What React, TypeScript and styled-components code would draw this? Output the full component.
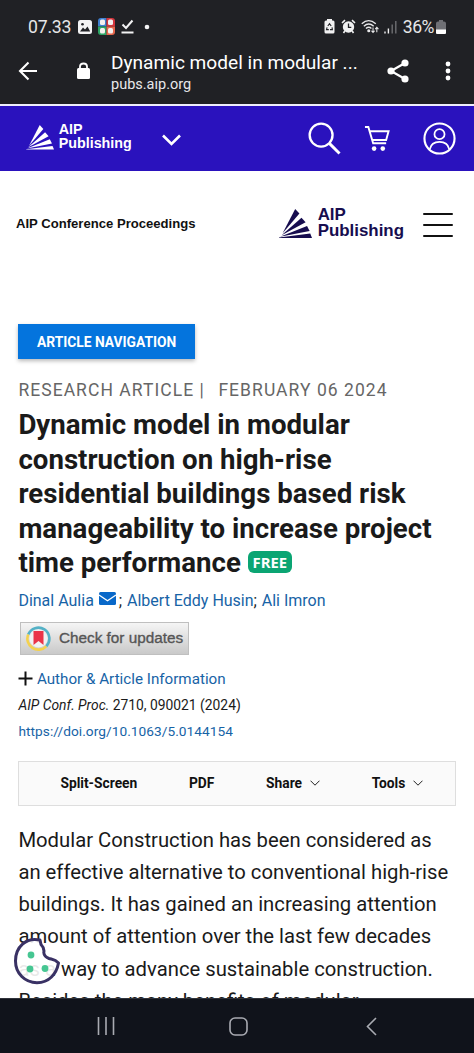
import styled, { createGlobalStyle } from "styled-components";

import type { FC } from "react";

const GlobalStyle = createGlobalStyle`
    * {
        box-sizing: border-box;
    }

    body {
        margin: 0;
        background-color: #fff;
        font-family: Roboto, "Liberation Sans", sans-serif;
    }

    h1, p {
        margin: 0;
    }

    svg {
        display: block;
        flex: none;
    }
`;

const Screen = styled.div`
    width: 474px;
    height: 1053px;
    display: flex;
    flex-flow: column;
    position: relative;
    overflow: hidden;
`;

const StatusBar = styled.div`
    height: 46px;
    flex: none;
    padding: 7px 28px 0 28px;
    display: flex;
    align-items: center;
    justify-content: space-between;
    background-color: #202125;
    color: #e6e6e8;
    font-size: 17.6px;
`;

const StatusGroup = styled.div<{ $gap: number }>`
    display: flex;
    align-items: center;
    gap: ${props => props.$gap}px;
`;

const Clock = styled.span`
    width: 43px;
    letter-spacing: -.2px;
    white-space: nowrap;
`;

const Battery = styled.span`
    display: flex;
    align-items: center;
    gap: 2px;
    letter-spacing: -.5px;
`;

const BrowserBar = styled.div`
    height: 58px;
    flex: none;
    padding: 0 20px 8px 18px;
    display: flex;
    align-items: center;
    background-color: #202125;
    color: #fff;
`;

const PageInfo = styled.div`
    width: 250px;
    margin: 0 26px 0 20px;
    padding-top: 1px;
    display: flex;
    flex-flow: column;
    white-space: nowrap;
`;

const PageTitle = styled.span`
    font-size: 19.1px;
    line-height: 25px;
`;

const PageHost = styled.span`
    font-size: 14.5px;
    line-height: 19px;
    color: #e8e8ea;
`;

const MoreButton = styled.div`
    margin-left: 35px;
`;

const SiteBar = styled.header`
    height: 67px;
    flex: none;
    padding: 0 18px 0 26px;
    display: flex;
    align-items: center;
    border-top: 2px solid #f0eefc;
    background-color: #2a12bd;
    color: #fff;
`;

const Logo = styled.div<{ $size: number; $color: string }>`
    margin-bottom: 4px;
    display: flex;
    align-items: flex-end;
    gap: ${props => props.$size * .33}px;
    color: ${props => props.$color};
    font-family: "Liberation Sans", sans-serif;
    font-weight: 700;
    font-size: ${props => props.$size}px;
    line-height: ${props => props.$size * .93}px;
`;

const LogoName = styled.span`
    display: flex;
    flex-flow: column;
`;

const SiteChevron = styled.div`
    margin: 3px auto 0 30px;
`;

const SiteActions = styled.div`
    display: flex;
    align-items: center;
`;

const SiteAction = styled.div<{ $before?: number }>`
    margin-left: ${props => props.$before ?? 0}px;
`;

const JournalBar = styled.div`
    height: 107px;
    flex: none;
    padding: 0 21px 0 16px;
    display: flex;
    align-items: center;
`;

const JournalName = styled.span`
    margin: 0 auto 3px 0;
    color: #111;
    font-family: "Liberation Sans", sans-serif;
    font-weight: 700;
    font-size: 13.1px;
    white-space: nowrap;
`;

const MenuLines = styled.div`
    width: 30px;
    height: 24px;
    margin: 1px 0 0 19px;
    display: flex;
    flex-flow: column;
    justify-content: space-between;

    span {
        height: 2px;
        border-radius: 1px;
        background-color: #111;
    }
`;

const Article = styled.main`
    flex: 1;
    min-height: 0;
    padding: 46px 18px 0 18.4px;
    display: flex;
    flex-flow: column;
    align-items: flex-start;
    overflow: hidden;
    color: #1a1a1a;
    white-space: nowrap;
`;

const NavigationButton = styled.button`
    width: 176.5px;
    height: 35px;
    flex: none;
    padding: 0;
    border: 0;
    background-color: #0474dd;
    box-shadow: 0 2px 4px rgba(0, 0, 0, .28);
    color: #fff;
    font-family: inherit;
    font-weight: 700;
    font-size: 13.8px;
`;

const Kicker = styled.div`
    margin-top: 19px;
    display: flex;
    color: #666;
    font-size: 17.5px;
    line-height: 24px;
    letter-spacing: 1.05px;
`;

const KickerDate = styled.span`
    margin-left: 13.5px;
`;

const ArticleTitle = styled.h1`
    margin-top: 6px;
    font-weight: 700;
    font-size: 27.65px;
    line-height: 34.55px;
`;

const Line = styled.span`
    display: block;
`;

const FreeTag = styled.span`
    width: 44px;
    height: 22px;
    margin-left: 7px;
    display: inline-flex;
    align-items: center;
    justify-content: center;
    vertical-align: 4px;
    border-radius: 6px;
    background-color: #0ba573;
    color: #fff;
    font-family: "Open Sans", sans-serif;
    font-weight: 700;
    font-size: 14.8px;
    line-height: 22px;
`;

const Authors = styled.div`
    height: 24px;
    margin-top: 10px;
    display: flex;
    align-items: center;
    font-size: 16px;
`;

const Link = styled.a`
    color: #1763a6;
`;

const Mail = styled.span`
    margin: 0 3px 4px 5px;
`;

const Separator = styled.span`
    margin-right: 4.8px;
`;

const UpdatesBadge = styled.div`
    width: 169.5px;
    height: 33px;
    flex: none;
    margin: 12px 0 0 1.6px;
    padding-left: 5px;
    display: flex;
    align-items: center;
    gap: 8px;
    border: 1px solid #bfbfbf;
    background: linear-gradient(#f5f5f5, #c9c9c9);
    color: #555;
    font-family: "Liberation Sans", sans-serif;
    font-weight: 400;
    font-size: 15.3px;
    -webkit-text-stroke: .35px #555;
`;

const InfoToggle = styled.div`
    height: 26px;
    margin-top: 15px;
    display: flex;
    align-items: center;
    gap: 3.5px;
    font-size: 15.2px;
`;

const Citation = styled.p`
    margin-top: 4px;
    font-size: 13.85px;
    line-height: 26px;
`;

const Doi = styled.p`
    font-size: 13.7px;
    line-height: 26px;
    letter-spacing: .05px;
`;

const Toolbar = styled.div`
    width: 438px;
    height: 45px;
    flex: none;
    margin-top: 17px;
    padding: 0 32px 0 41px;
    display: flex;
    align-items: center;
    justify-content: space-between;
    border: 1px solid #dedede;
    background-color: #fafafa;
    color: #111;
    font-weight: 700;
    font-size: 13.8px;
`;

const ToolbarItem = styled.span`
    display: flex;
    align-items: center;
    gap: 8px;
`;

const Abstract = styled.p`
    margin-top: 18px;
    font-size: 20.25px;
    line-height: 32.2px;
`;

const CookieButton = styled.div`
    position: absolute;
    left: 13px;
    top: 937px;
`;

const SystemBar = styled.nav`
    height: 55px;
    flex: none;
    display: grid;
    grid-template-columns: 212px 52px 214px;
    align-items: center;
    justify-items: center;
    border-top: 1px solid #30333b;
    background-color: #10131b;
`;

const SystemRecents = styled.div`
    grid-column: 1;
`;

const LogoMark: FC<{ width: number }> = props => (
    <svg width={props.width} height={props.width * .88} viewBox="0 0 32 28" fill="currentColor">
        <path d="M15.7 0 L19.8 4.4 L3.5 23.5 Z" />
        <path d="M21.8 8.3 L25.8 12.8 L2.5 25.3 Z" />
        <path d="M27.2 16.3 L29.7 21.2 L1 26.8 Z" />
        <path d="M30.3 23.8 L32 28 H0 V27.5 Z" />
    </svg>
);

const AipLogo: FC<{ size: number; mark: number; color: string }> = props => (
    <Logo $size={props.size} $color={props.color}>
        <LogoMark width={props.mark} />
        <LogoName>
            <span>AIP</span>
            <span>Publishing</span>
        </LogoName>
    </Logo>
);

const SmallChevron = () => (
    <svg width="10" height="6" viewBox="0 0 10 6" fill="none" stroke="#222" strokeWidth="1">
        <path d="M.5 .7 L5 5.2 L9.5 .7" />
    </svg>
);

const StatusIcons = () => (
    <StatusGroup $gap={6}>
        <svg width="14" height="14" viewBox="0 0 14 14">
            <rect width="14" height="14" rx="2.5" fill="#f3f3f4" />
            <path d="M2 11.5 L5 7.5 L7 9.5 L9.5 6.5 L12.2 11.5 Z" fill="#202125" />
            <circle cx="4.5" cy="4.3" r="1.3" fill="#202125" />
        </svg>
        <svg width="17" height="17" viewBox="0 0 17 17">
            <path d="M3 0 H8.5 V8.5 H0 V3 Q0 0 3 0" fill="#3f7fd0" />
            <path d="M8.5 0 H14 Q17 0 17 3 V8.5 H8.5 Z" fill="#d3343c" />
            <path d="M0 8.5 H8.5 V17 H3 Q0 17 0 14 Z" fill="#2da565" />
            <path d="M8.5 8.5 H17 V14 Q17 17 14 17 H8.5 Z" fill="#e5654b" />
            <g fill="#f4f0ee">
                <rect x="2" y="1.5" width="5" height="5.5" rx="1.5" />
                <rect x="10" y="1.5" width="5" height="5.5" rx="1.5" />
                <rect x="2" y="10" width="5" height="5.5" rx="1.5" />
                <rect x="10" y="10" width="5" height="5.5" rx="1.5" />
            </g>
        </svg>
        <svg width="13" height="15" viewBox="0 0 13 15" fill="none" stroke="#f3f3f4" strokeWidth="2">
            <path d="M1.5 5.5 L5 9 L11.5 1.5 M.5 13.5 H12.5" />
        </svg>
        <svg width="17" height="6" viewBox="0 0 17 6" fill="#f3f3f4">
            <circle cx="7" cy="3" r="2.3" />
        </svg>
    </StatusGroup>
);

const SignalIcons = () => (
    <StatusGroup $gap={5}>
        <svg width="12" height="15" viewBox="0 0 12 15">
            <path d="M3 0 H8 V1.5 H9 Q10.5 1.5 10.5 3 V13 Q10.5 14.5 9 14.5 H2 Q.5 14.5 .5 13 V3 Q.5 1.5 2 1.5 H3 Z" fill="#f1f1f2" />
            <path d="M3.8 7 L5.5 4.6 L7.2 7 M8 8.3 L8.4 10.6 H6 M4.8 10.6 H2.5 L3.1 8.3" fill="none" stroke="#202125" strokeWidth="1.1" />
        </svg>
        <svg width="15" height="15" viewBox="0 0 15 15">
            <circle cx="7.5" cy="8" r="5.7" fill="#f1f1f2" />
            <path d="M1 4 L4 1.2 M14 4 L11 1.2 M3.8 12 L2.5 14 M11.2 12 L12.5 14" stroke="#f1f1f2" strokeWidth="1.6" />
            <path d="M7.5 4.5 V8.3 H10.3" fill="none" stroke="#202125" strokeWidth="1.3" />
        </svg>
        <svg width="18" height="15" viewBox="0 0 19 15" fill="none" stroke="#e8e8ea" strokeWidth="1.5">
            <path d="M.8 4.6 Q8 -2 15.6 4.6 M3 7.2 Q8.2 2.5 13.4 7.2 M5.2 9.6 Q8.2 7 11 9.6" />
            <circle cx="8.2" cy="12" r=".9" fill="#e8e8ea" />
            <path d="M12.7 8.5 V13.5 M11 12 L12.7 13.8 L14.4 12 M16.7 13.5 V8.5 M15 10.2 L16.7 8.4 L18.4 10.2" strokeWidth="1.1" />
        </svg>
        <svg width="14" height="14" viewBox="0 0 14 14">
            <path d="M1 11.5 V13.5 M4.4 8.5 V13.5" stroke="#f1f1f2" strokeWidth="1.4" />
            <path d="M8.2 4.5 V13.5 M11.8 1 V13.5" stroke="#6d6e72" strokeWidth="1.4" />
        </svg>
        <Battery>
            36%
            <svg width="10" height="14" viewBox="0 0 10 14">
                <path d="M3 0 H7 V1.5 H8 Q10 1.5 10 3.5 V14 H0 V3.5 Q0 1.5 2 1.5 H3 Z" fill="#6f7075" />
                <path d="M0 9.5 H10 V12.5 Q10 14 8.5 14 H1.5 Q0 14 0 12.5 Z" fill="#fff" />
            </svg>
        </Battery>
    </StatusGroup>
);

const titleLines = [
    "Dynamic model in modular",
    "construction on high-rise",
    "residential buildings based risk",
    "manageability to increase project"
];

const abstractLines = [
    "Modular Construction has been considered as",
    "an effective alternative to conventional high-rise",
    "buildings. It has gained an increasing attention",
    "amount of attention over the last few decades",
    "as a way to advance sustainable construction.",
    "Besides the many benefits of modular"
];

const App: FC = () => (
    <Screen>
        <GlobalStyle />
        <StatusBar>
            <StatusGroup $gap={7}>
                <Clock>07.33</Clock>
                <StatusIcons />
            </StatusGroup>
            <SignalIcons />
        </StatusBar>
        <BrowserBar>
            <svg width="20" height="20" viewBox="0 0 20 20" fill="none" stroke="#fff" strokeWidth="2.1">
                <path d="M19 10 H2.5 M10.5 1.5 L2 10 L10.5 18.5" />
            </svg>
            <svg width="53" height="18" viewBox="0 0 53 18">
                <rect x="39" y="6" width="13" height="11" rx="1.5" fill="#fff" />
                <path d="M42 7 V4.5 Q42 1.5 45.5 1.5 Q49 1.5 49 4.5 V7" fill="none" stroke="#fff" strokeWidth="1.8" />
            </svg>
            <PageInfo>
                <PageTitle>Dynamic model in modular ...</PageTitle>
                <PageHost>pubs.aip.org</PageHost>
            </PageInfo>
            <svg width="23" height="24" viewBox="0 0 23 24" fill="#fff">
                <path d="M18 4 L4 12 L18 20" fill="none" stroke="#fff" strokeWidth="2.2" />
                <circle cx="18" cy="4" r="3.6" />
                <circle cx="4" cy="12" r="3.6" />
                <circle cx="18" cy="20" r="3.6" />
            </svg>
            <MoreButton>
                <svg width="6" height="20" viewBox="0 0 6 20" fill="#fff">
                    <circle cx="3" cy="3" r="2.4" />
                    <circle cx="3" cy="10" r="2.4" />
                    <circle cx="3" cy="17" r="2.4" />
                </svg>
            </MoreButton>
        </BrowserBar>
        <SiteBar>
            <AipLogo size={14.3} mark={28} color="#fff" />
            <SiteChevron>
                <svg width="19" height="12" viewBox="0 0 19 12" fill="none" stroke="#fff" strokeWidth="2.6">
                    <path d="M1 1.5 L9.5 10 L18 1.5" />
                </svg>
            </SiteChevron>
            <SiteActions>
                <svg width="33" height="33" viewBox="0 0 34 34" fill="none" stroke="#fff" strokeWidth="2.4">
                    <circle cx="13.5" cy="13.5" r="11.8" />
                    <path d="M22 22 L32.5 32.5" strokeWidth="3" />
                </svg>
                <SiteAction $before={23}>
                    <svg width="26" height="27" viewBox="0 0 27 27" fill="none" stroke="#fff" strokeWidth="2">
                        <path d="M1 1.5 H4.5 L9.5 18.5 H23 M5.8 6 H25.5 L23 15 H8.5" />
                        <circle cx="10.5" cy="24" r="2.4" fill="#fff" stroke="none" />
                        <circle cx="19.5" cy="24" r="2.4" fill="#fff" stroke="none" />
                    </svg>
                </SiteAction>
                <SiteAction $before={33}>
                    <svg width="33" height="33" viewBox="0 0 34 34" fill="none" stroke="#fff" strokeWidth="1.8">
                        <circle cx="17" cy="17" r="15.5" strokeWidth="2.2" />
                        <circle cx="17" cy="12.5" r="5.2" />
                        <path d="M7 28 Q8.5 20.5 17 20.5 Q25.5 20.5 27 28" />
                    </svg>
                </SiteAction>
            </SiteActions>
        </SiteBar>
        <JournalBar>
            <JournalName>AIP Conference Proceedings</JournalName>
            <AipLogo size={16.9} mark={33} color="#170d4f" />
            <MenuLines>
                <span />
                <span />
                <span />
            </MenuLines>
        </JournalBar>
        <Article>
            <NavigationButton>ARTICLE NAVIGATION</NavigationButton>
            <Kicker>
                <span>RESEARCH ARTICLE |</span>
                <KickerDate>FEBRUARY 06 2024</KickerDate>
            </Kicker>
            <ArticleTitle>
                {titleLines.map(line => <Line key={line}>{line}</Line>)}
                <Line>time performance<FreeTag>FREE</FreeTag></Line>
            </ArticleTitle>
            <Authors>
                <Link>Dinal Aulia</Link>
                <Mail>
                    <svg width="17" height="13" viewBox="0 0 17 13">
                        <rect width="17" height="13" rx="1.5" fill="#0868c9" />
                        <path d="M0 3 L8.5 8.7 L17 3" fill="none" stroke="#fff" strokeWidth="1.3" />
                    </svg>
                </Mail>
                <Separator>;</Separator>
                <Link>Albert Eddy Husin</Link>
                <Separator>;</Separator>
                <Link>Ali Imron</Link>
            </Authors>
            <UpdatesBadge>
                <svg width="25" height="25" viewBox="0 0 25 25" fill="none">
                    <circle cx="12.5" cy="12.5" r="9" fill="#f2f2f2" />
                    <path d="M2.2 8.5 A11 11 0 1 1 20.3 20.3" stroke="#54b1c6" strokeWidth="2.6" />
                    <path d="M2.2 8.5 A11 11 0 0 0 20.3 20.3" stroke="#f4d14e" strokeWidth="2.6" />
                    <path d="M7.5 5 H17.5 V19 L12.5 15 L7.5 19 Z" fill="#ea3448" />
                </svg>
                Check for updates
            </UpdatesBadge>
            <InfoToggle>
                <svg width="15" height="15" viewBox="0 0 15 15" stroke="#111" strokeWidth="2">
                    <path d="M7.5 .5 V14.5 M.5 7.5 H14.5" />
                </svg>
                <Link>Author &amp; Article Information</Link>
            </InfoToggle>
            <Citation><em>AIP Conf. Proc.</em> 2710, 090021 (2024)</Citation>
            <Doi><Link>https://doi.org/10.1063/5.0144154</Link></Doi>
            <Toolbar>
                <ToolbarItem>Split-Screen</ToolbarItem>
                <ToolbarItem>PDF</ToolbarItem>
                <ToolbarItem>Share <SmallChevron /></ToolbarItem>
                <ToolbarItem>Tools <SmallChevron /></ToolbarItem>
            </Toolbar>
            <Abstract>
                {abstractLines.map(line => <Line key={line}>{line}</Line>)}
            </Abstract>
        </Article>
        <SystemBar>
            <SystemRecents>
                <svg width="18" height="18" viewBox="0 0 18 18" stroke="#a9abb2" strokeWidth="1.6">
                    <path d="M1.5 0 V18 M9 0 V18 M16.5 0 V18" />
                </svg>
            </SystemRecents>
            <svg width="19" height="19" viewBox="0 0 19 19" fill="none" stroke="#a9abb2" strokeWidth="1.6">
                <rect x="1" y="1" width="17" height="17" rx="5" />
            </svg>
            <svg width="11" height="19" viewBox="0 0 11 19" fill="none" stroke="#a9abb2" strokeWidth="1.6">
                <path d="M10 1 L1.5 9.5 L10 18" />
            </svg>
        </SystemBar>
        <CookieButton>
            <svg width="48" height="48" viewBox="0 0 48 48">
                <path d="M27 3 C13 0 2.5 10 2.5 24 C2.5 36.5 12 45.7 24 45.7 C36 45.7 43.5 37 45.5 26 C42 22 39 22.5 36 21.5 C32 20 31 18.5 30.8 15.5 C31.5 12 30 9.5 28 7.5 Z" fill="#fff" fillOpacity=".9" stroke="#393164" strokeWidth="3" strokeLinejoin="round" />
                <g fill="#46c692">
                    <circle cx="18" cy="18" r="3.4" />
                    <circle cx="17" cy="32" r="3.4" />
                    <circle cx="32" cy="31.5" r="3.4" />
                </g>
            </svg>
        </CookieButton>
    </Screen>
);

export default App;
